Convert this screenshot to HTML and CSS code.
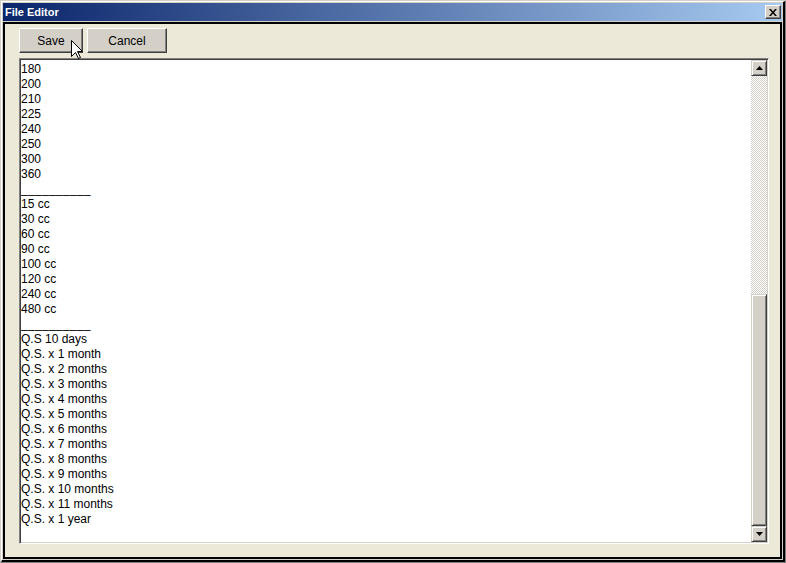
FILE: index.html
```html
<!DOCTYPE html>
<html>
<head>
<meta charset="utf-8">
<title>File Editor</title>
<link rel="stylesheet" href="styles.css">
</head>
<body>
<div class="window">
  <div class="frame">
    <div class="titlebar">
      <span class="title">File Editor</span>
      <button class="close" aria-label="Close">
        <svg width="8" height="7" viewBox="0 0 8 7"><path d="M0 0h2l2 2.5L6 0h2L5 3.5 8 7H6L4 4.5 2 7H0l3-3.5z" fill="#000"/></svg>
      </button>
    </div>
    <div class="client">
      <div class="toolbar">
        <button class="btn btn-save">Save</button>
        <button class="btn btn-cancel">Cancel</button>
      </div>
      <div class="editor">
        <pre class="editor-text">180
200
210
225
240
250
300
360
<span class="rule">__________</span>
15 cc
30 cc
60 cc
90 cc
100 cc
120 cc
240 cc
480 cc
<span class="rule">__________</span>
Q.S 10 days
Q.S. x 1 month
Q.S. x 2 months
Q.S. x 3 months
Q.S. x 4 months
Q.S. x 5 months
Q.S. x 6 months
Q.S. x 7 months
Q.S. x 8 months
Q.S. x 9 months
Q.S. x 10 months
Q.S. x 11 months
Q.S. x 1 year</pre>
        <div class="scrollbar">
          <div class="sb-btn">
            <svg width="7" height="4" viewBox="0 0 7 4"><path d="M3.5 0L7 4H0z" fill="#000"/></svg>
          </div>
          <div class="sb-track"></div>
          <div class="sb-thumb"></div>
          <div class="sb-btn">
            <svg width="7" height="4" viewBox="0 0 7 4"><path d="M0 0h7L3.5 4z" fill="#000"/></svg>
          </div>
        </div>
      </div>
    </div>
  </div>
  <svg class="cursor" width="13" height="20" viewBox="0 0 13 20"><path d="M0.5 0.5V16.5L4.5 12.5L7.5 18.5L9.5 17.5L6.5 11.5H11.5Z" fill="#fff" stroke="#000" stroke-width="1" stroke-linejoin="miter"/></svg>
</div>
</body>
</html>
```

FILE: styles.css
```css
html, body {
  margin: 0;
  padding: 0;
  background: #d4d0c8;
}

.window {
  position: relative;
  width: 786px;
  height: 563px;
  box-sizing: border-box;
  border-style: solid;
  border-width: 1px;
  border-color: #d4d0c8 #808080 #808080 #d4d0c8;
  background: #d4d0c8;
}

.frame {
  height: 100%;
  box-sizing: border-box;
  border-style: solid;
  border-width: 1px 2px 2px 1px;
  border-color: #fff #000 #000 #fff;
  padding: 1px;
  display: flex;
  flex-direction: column;
}

.titlebar {
  height: 18px;
  flex: 0 0 18px;
  margin-bottom: 1px;
  background: linear-gradient(to right, #0a246a, #a6caf0);
  display: flex;
  align-items: center;
  justify-content: space-between;
  padding: 0 1px 0 2px;
}

.title {
  font-family: "Liberation Sans", Arial, sans-serif;
  font-weight: bold;
  font-size: 11px;
  line-height: 18px;
  color: #fff;
}

.close {
  width: 16px;
  height: 14px;
  padding: 0;
  margin: 0;
  box-sizing: border-box;
  background: #d4d0c8;
  border-style: solid;
  border-width: 1px;
  border-color: #fff #404040 #404040 #fff;
  box-shadow: inset -1px -1px 0 #808080;
  display: flex;
  align-items: center;
  justify-content: center;
  padding-right: 1px;
}

.close svg {
  display: block;
}

.client {
  flex: 1;
  border: 2px solid #000;
  background: #ece9d8;
  padding: 4px 0 0 14px;
  display: flex;
  flex-direction: column;
}

.toolbar {
  display: flex;
  gap: 4px;
  margin-bottom: 5px;
}

.btn {
  height: 25px;
  box-sizing: border-box;
  margin: 0;
  padding: 1px 0 0;
  background: #d4d0c8;
  border-style: solid;
  border-width: 1px;
  border-color: #fff #404040 #404040 #fff;
  box-shadow: inset -1px -1px 0 #808080;
  font-family: "Liberation Sans", Arial, sans-serif;
  font-size: 12px;
  color: #000;
}

.btn-save {
  width: 64px;
}

.btn-cancel {
  width: 80px;
}

.editor {
  width: 750px;
  height: 486px;
  box-sizing: border-box;
  border-style: solid;
  border-width: 1px;
  border-color: #808080 #fff #fff #808080;
  box-shadow: inset 1px 1px 0 #404040, inset -1px -1px 0 #d4d0c8;
  padding: 1px;
  background: #fff;
  display: flex;
}

.editor-text {
  flex: 1;
  margin: 0;
  padding: 2px 0 0 0;
  overflow: hidden;
  font-family: "Liberation Sans", Arial, sans-serif;
  font-size: 12px;
  line-height: 15px;
  color: #000;
  white-space: pre;
}

.rule {
  letter-spacing: 0.3px;
}

.scrollbar {
  width: 16px;
  display: flex;
  flex-direction: column;
}

.sb-btn {
  height: 16px;
  flex: 0 0 16px;
  box-sizing: border-box;
  background: #d4d0c8;
  border-style: solid;
  border-width: 1px;
  border-color: #d4d0c8 #404040 #404040 #d4d0c8;
  box-shadow: inset 1px 1px 0 #fff, inset -1px -1px 0 #808080;
  display: flex;
  align-items: center;
  justify-content: center;
}

.sb-btn svg {
  display: block;
}

.sb-track {
  flex: 1;
  background: repeating-conic-gradient(#d4d0c8 0 25%, #fff 0 50%) 0 0 / 2px 2px;
}

.sb-thumb {
  height: 232px;
  flex: 0 0 232px;
  box-sizing: border-box;
  background: #d4d0c8;
  border-style: solid;
  border-width: 1px;
  border-color: #d4d0c8 #404040 #404040 #d4d0c8;
  box-shadow: inset 1px 1px 0 #fff, inset -1px -1px 0 #808080;
}

.cursor {
  position: absolute;
  left: 70px;
  top: 39px;
  display: block;
}
```
